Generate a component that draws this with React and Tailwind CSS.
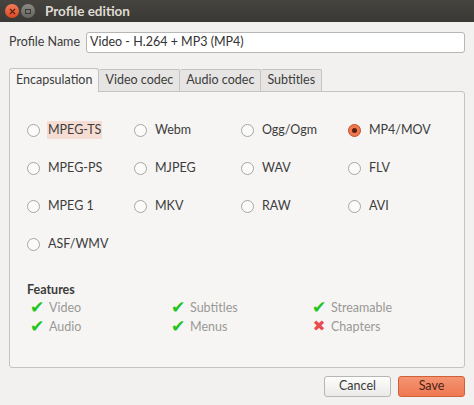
import { X } from "lucide-react";

const formats = [
  ["MPEG-TS", "Webm", "Ogg/Ogm", "MP4/MOV"],
  ["MPEG-PS", "MJPEG", "WAV", "FLV"],
  ["MPEG 1", "MKV", "RAW", "AVI"],
  ["ASF/WMV"],
];

const features = [
  ["Video", true],
  ["Subtitles", true],
  ["Streamable", true],
  ["Audio", true],
  ["Menus", true],
  ["Chapters", false],
];

function Radio({ label, checked, focused }) {
  return (
    <div className="flex items-center gap-[7px] h-[18px]">
      <span
        className={`w-[13px] h-[13px] rounded-full border flex items-center justify-center ${
          checked ? "border-[#c0502a] bg-[#f07a4f]" : "border-[#a8a6a2] bg-[#fbfbfa]"
        }`}
      >
        {checked && <span className="w-[5px] h-[5px] rounded-full bg-[#5a2010]" />}
      </span>
      <span className={`px-[1px] ${focused ? "bg-[#f5ddd3]" : ""}`}>{label}</span>
    </div>
  );
}

export default function App() {
  return (
    <div
      className="w-[474px] h-[405px] bg-[#f2f1f0] text-[#3c3c3c] text-[12.5px] flex flex-col overflow-hidden"
      style={{ fontFamily: 'Lato, "Noto Sans", sans-serif' }}
    >
      {/* title bar */}
      <div className="h-[22px] bg-gradient-to-b from-[#45443f] to-[#3a3935] flex items-center px-[5px] shrink-0">
        <span className="w-[14px] h-[14px] rounded-full bg-gradient-to-b from-[#f37d58] to-[#d9461f] flex items-center justify-center">
          <X size={9} strokeWidth={3} className="text-[#5a1f0f]" />
        </span>
        <span className="ml-[2px] w-[14px] h-[14px] rounded-full bg-gradient-to-b from-[#8b8a85] to-[#65645f] flex items-center justify-center">
          <span className="w-[6px] h-[5px] border border-[#3a3935]" />
        </span>
        <span className="ml-[10px] font-bold text-[#dfdbd2] text-[13.5px]">Profile edition</span>
      </div>

      <div className="flex-1 flex flex-col px-[9px] pt-[10px] pb-[8px]">
        {/* name */}
        <div className="flex items-center gap-[6px] h-[21px]">
          <span>Profile Name</span>
          <div className="flex-1 h-[21px] bg-white border border-[#b8b6b2] rounded-[3px] flex items-center px-[3px] text-[#333]">
            Video - H.264 + MP3 (MP4)
          </div>
        </div>

        {/* tabs */}
        <div className="mt-[15px] flex items-end h-[23px]">
          <div className="h-[24px] px-[6px] flex items-center bg-[#f6f5f4] border border-[#c5c3bf] border-b-0 rounded-t-[3px] relative z-10 mb-[-1px]">
            Encapsulation
          </div>
          {["Video codec", "Audio codec", "Subtitles"].map((t) => (
            <div
              key={t}
              className="h-[22px] px-[6px] flex items-center bg-[#e6e5e3] border border-[#c5c3bf] border-l-0 border-b-0 rounded-t-[2px]"
            >
              {t}
            </div>
          ))}
        </div>

        {/* panel */}
        <div className="flex-1 border border-[#c5c3bf] rounded-b-[3px] rounded-tr-[3px] bg-[#f6f5f4] px-[17px] pt-[29px] flex flex-col">
          <div className="grid grid-cols-[107px_107px_107px_1fr] gap-y-[20px]">
            {formats.flat().map((f) => (
              <Radio key={f} label={f} checked={f === "MP4/MOV"} focused={f === "MPEG-TS"} />
            ))}
          </div>

          <div className="mt-[28px] font-bold text-[#3c3c3c] leading-[17px]">Features</div>
          <div className="grid grid-cols-[141px_141px_1fr] pl-[3px] text-[#9a9996] leading-[19px]">
            {features.map(([f, ok]) => (
              <div key={f} className="flex items-center gap-[5px] h-[19px]">
                <span
                  className={`w-[14px] text-center leading-[19px] ${
                    ok ? "text-[17px] text-[#22c422]" : "text-[15px] text-[#e84c4c]"
                  }`}
                  style={{ fontFamily: '"DejaVu Sans", sans-serif' }}
                >
                  {ok ? "✔" : "✖"}
                </span>
                <span>{f}</span>
              </div>
            ))}
          </div>
        </div>

        {/* buttons */}
        <div className="mt-[8px] flex justify-end gap-[7px]">
          <button className="w-[67px] h-[21px] border border-[#b8b6b2] rounded-[3px] bg-gradient-to-b from-[#fdfdfc] to-[#ebeae8] text-[#3c3c3c]">
            Cancel
          </button>
          <button className="w-[67px] h-[21px] border border-[#d0603a] rounded-[3px] bg-gradient-to-b from-[#f59472] to-[#ee7852] text-[#4a2418]">
            Save
          </button>
        </div>
      </div>
    </div>
  );
}
